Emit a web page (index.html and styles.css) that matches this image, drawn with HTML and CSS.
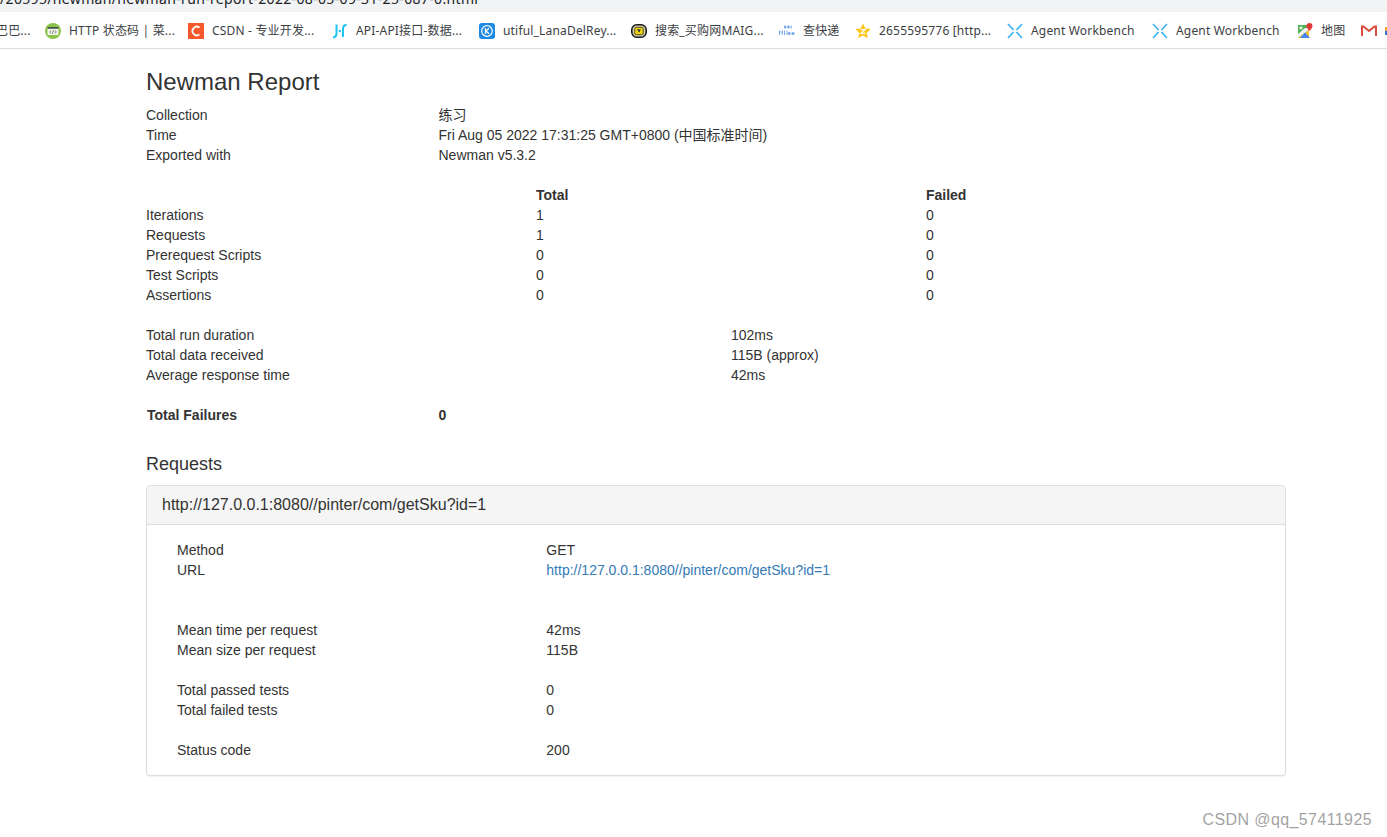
FILE: index.html
```html
<!DOCTYPE html>
<html lang="zh-CN">
<head>
<meta charset="utf-8">
<title>Newman Report</title>
<link rel="stylesheet" href="styles.css">
</head>
<body>
<header class="chrome">
  <div class="address"><span class="address-text">/20595/newman/newman-run-report-2022-08-05-09-31-25-087-0.html</span></div>
  <nav class="bookmarks">
    <a class="bm bm-first"><span class="bm-label">巴巴...</span></a>
    <a class="bm w-103"><svg class="ico" viewBox="0 0 16 16"><circle cx="8" cy="8" r="8" fill="#8bc34a"/><rect x="2.500" y="4" width="11" height="8" rx="1" fill="#f3f6ee"/><rect x="2.500" y="4" width="11" height="1.800" fill="#46564a"/><path d="M6 7.400 4.800 9 6 10.600M10 7.400 11.200 9 10 10.600M8.600 7.200 7.400 10.800" stroke="#5d6b52" stroke-width=".8" fill="none"/></svg><span class="bm-label">HTTP 状态码 | 菜...</span></a>
    <a class="bm w-104"><svg class="ico" viewBox="0 0 16 16"><rect width="16" height="16" fill="#f4582b"/><path d="M11.500 4.600A4.300 4.300 0 1 0 11.500 11.400" stroke="#fff" stroke-width="1.800" fill="none"/></svg><span class="bm-label">CSDN - 专业开发...</span></a>
    <a class="bm w-107"><svg class="ico" viewBox="0 0 16 16"><path d="M4.500 1.500V10.500C4.500 13 3 14.200 1 14.500M14.500 2C12 2 11 3.500 11 6V14" stroke="#19c3f3" stroke-width="2" fill="none"/><circle cx="7.800" cy="8" r="1.200" fill="#19c3f3"/></svg><span class="bm-label">API-API接口-数据...</span></a>
    <a class="bm w-112"><svg class="ico" viewBox="0 0 16 16"><rect width="16" height="16" rx="3" fill="#1e88e5"/><circle cx="8" cy="8" r="5.300" stroke="#fff" stroke-width="1.200" fill="none"/><path d="M6.500 5.200V10.800M10 5.200 7 8l3 2.800" stroke="#fff" stroke-width="1.300" fill="none"/></svg><span class="bm-label">utiful_LanaDelRey...</span></a>
    <a class="bm w-108"><svg class="ico" viewBox="0 0 16 16"><rect x=".8" y="1.800" width="14.400" height="12.400" rx="5" fill="#d9d4a8" stroke="#1c1c1c" stroke-width="1.600"/><rect x="3.800" y="4.300" width="8.400" height="7.400" rx="1.500" fill="#f5d90a" stroke="#222" stroke-width=".8"/><path d="M6 6.200h4L8 9.800z" fill="#333"/></svg><span class="bm-label">搜索_买购网MAIG...</span></a>
    <a class="bm w-36"><svg class="ico" viewBox="0 0 16 16"><g fill="#7aa7ea"><rect x="5" y="2.500" width="2.400" height="3" rx="1"/><rect x="8.300" y="2.500" width="2.400" height="3" rx="1"/><rect x="11.700" y="2.500" width="1" height="3"/><rect x="0" y="7.500" width="1" height="4.500"/><rect x="2.800" y="7.500" width="1" height="4.500"/><rect x="1" y="8.500" width="1.800" height="1"/><rect x="5" y="7.500" width="1" height="4.500"/><rect x="7.500" y="7.500" width="1" height="4.500"/><rect x="9" y="9" width="2.500" height="3" rx="1"/><circle cx="14" cy="10.500" r="1.600"/></g></svg><span class="bm-label">查快递</span></a>
    <a class="bm w-112"><svg class="ico" viewBox="0 0 16 16"><path d="M8 .5 10.300 5.500 15.800 6.100 11.700 9.800 12.900 15.200 8 12.400 3.100 15.200 4.300 9.800.2 6.100 5.700 5.500z" fill="#fcc419"/><path d="M5.600 6.600H10.200L5.800 10.400h4.600" stroke="#fff" stroke-width="1.200" fill="none"/></svg><span class="bm-label">2655595776 [http...</span></a>
    <a class="bm w-105"><svg class="ico" viewBox="0 0 16 16"><path d="M1 1 6.500 7M15 1 9.500 7M1 15 6.500 9M15 15 9.500 9" stroke="#3fb2f4" stroke-width="1.700" fill="none"/></svg><span class="bm-label">Agent Workbench</span></a>
    <a class="bm w-105"><svg class="ico" viewBox="0 0 16 16"><path d="M1 1 6.500 7M15 1 9.500 7M1 15 6.500 9M15 15 9.500 9" stroke="#3fb2f4" stroke-width="1.700" fill="none"/></svg><span class="bm-label">Agent Workbench</span></a>
    <a class="bm w-24"><svg class="ico" viewBox="0 0 16 16"><path d="M1 2h11v13H1z" fill="#4caf50"/><path d="M1 15V11L8 5h4v2z" fill="#f4f4f4"/><path d="M12 7 1 15h11z" fill="#fbc02d"/><path d="M3 15 8 9.500 13 15z" fill="#4285f4"/><rect x="2.500" y="3.500" width="3" height="3" fill="#dff0d8"/><path d="M12.500 0a3 3 0 0 1 3 3c0 2-3 5-3 5s-3-3-3-5a3 3 0 0 1 3-3z" fill="#e53935"/></svg><span class="bm-label">地图</span></a>
    <a class="bm bm-tail"><svg class="ico" viewBox="0 0 16 16"><path d="M1 13V3.500h1.500L8 8l5.500-4.500H15V13" stroke="#db4c3f" stroke-width="2" fill="none"/></svg><svg class="ico" viewBox="0 0 16 16"><rect x="0" y="4" width="2" height="4" fill="#f2a33a"/><rect x="0" y="8" width="2" height="4" fill="#3b6fc4"/></svg></a>
  </nav>
</header>

<main class="container">
  <h1 class="title">Newman Report</h1>
  <section class="block">
    <div class="row"><div class="col-3">Collection</div><div class="col-9">练习</div></div>
    <div class="row"><div class="col-3">Time</div><div class="col-9">Fri Aug 05 2022 17:31:25 GMT+0800 (中国标准时间)</div></div>
    <div class="row"><div class="col-3">Exported with</div><div class="col-9">Newman v5.3.2</div></div>
  </section>
  <section class="block">
    <div class="row strong"><div class="col-4">&nbsp;</div><div class="col-4">Total</div><div class="col-4">Failed</div></div>
    <div class="row"><div class="col-4">Iterations</div><div class="col-4">1</div><div class="col-4">0</div></div>
    <div class="row"><div class="col-4">Requests</div><div class="col-4">1</div><div class="col-4">0</div></div>
    <div class="row"><div class="col-4">Prerequest Scripts</div><div class="col-4">0</div><div class="col-4">0</div></div>
    <div class="row"><div class="col-4">Test Scripts</div><div class="col-4">0</div><div class="col-4">0</div></div>
    <div class="row"><div class="col-4">Assertions</div><div class="col-4">0</div><div class="col-4">0</div></div>
  </section>
  <section class="block">
    <div class="row"><div class="col-6">Total run duration</div><div class="col-6">102ms</div></div>
    <div class="row"><div class="col-6">Total data received</div><div class="col-6">115B (approx)</div></div>
    <div class="row"><div class="col-6">Average response time</div><div class="col-6">42ms</div></div>
  </section>
  <section class="failures">
    <div class="row strong"><div class="col-3 nudge">Total Failures</div><div class="col-9">0</div></div>
  </section>
  <h2 class="subtitle">Requests</h2>
  <section class="panel">
    <div class="panel-heading">http://127.0.0.1:8080//pinter/com/getSku?id=1</div>
    <div class="panel-body">
      <div class="block">
        <div class="row"><div class="col-4">Method</div><div class="col-8">GET</div></div>
        <div class="row"><div class="col-4">URL</div><div class="col-8"><a class="link">http://127.0.0.1:8080//pinter/com/getSku?id=1</a></div></div>
      </div>
      <div class="block block-wide">
        <div class="row"><div class="col-4">Mean time per request</div><div class="col-8">42ms</div></div>
        <div class="row"><div class="col-4">Mean size per request</div><div class="col-8">115B</div></div>
      </div>
      <div class="block">
        <div class="row"><div class="col-4">Total passed tests</div><div class="col-8">0</div></div>
        <div class="row"><div class="col-4">Total failed tests</div><div class="col-8">0</div></div>
      </div>
      <div class="row"><div class="col-4">Status code</div><div class="col-8">200</div></div>
    </div>
  </section>
</main>
<div class="watermark">CSDN @qq_57411925</div>
</body>
</html>
```
FILE: styles.css
```css
* { box-sizing: border-box; }
html, body { margin: 0; padding: 0; height: 837px; overflow: hidden; background: #fff; }
body {
  font-family: "Liberation Sans", "Noto Sans CJK SC", sans-serif;
  font-size: 14px;
  line-height: 20px;
  color: #333;
}

/* browser chrome */
.chrome { height: 49px; border-bottom: 1px solid #dcdee0; overflow: hidden; }
.address { height: 12px; background: #f1f3f4; overflow: hidden; }
.address-text {
  display: block;
  margin-top: -11px;
  font-size: 14px;
  line-height: 20px;
  letter-spacing: .34px;
  color: #202124;
  white-space: nowrap;
  font-family: "Noto Sans", "Liberation Sans", sans-serif;
}
.bookmarks {
  display: flex;
  align-items: center;
  gap: 16px;
  height: 36px;
  padding-top: 1px;
  margin-left: -4px;
  font-family: "Noto Sans", "Noto Sans CJK SC", sans-serif;
  font-size: 12px;
  letter-spacing: .18px;
  color: #3c4043;
  white-space: nowrap;
}
.bm { display: flex; align-items: center; gap: 8px; flex: none; }
.bm-first { width: 33px; }
.ico { width: 16px; height: 16px; flex: none; }
.bm-label { display: block; }
.w-103 .bm-label { width: 103px; }
.w-104 .bm-label { width: 104px; }
.w-105 .bm-label { width: 105px; }
.w-107 .bm-label { width: 107px; }
.w-112 .bm-label { width: 112px; }
.w-108 .bm-label { width: 108px; }
.w-36 .bm-label { width: 36px; }
.w-24 .bm-label { width: 24px; }

/* report */
.container { width: 1170px; margin-left: 131px; padding: 0 15px; }
.title { margin: 20px 0 10px; font-size: 24px; line-height: 26px; font-weight: 400; }
.row { display: flex; margin: 0 -15px; }
.strong { font-weight: 700; }
.col-3, .col-4, .col-6, .col-8, .col-9 { padding: 0 15px; min-height: 20px; }
.col-3 { width: 25%; }
.col-4 { width: 33.3333%; }
.col-6 { width: 50%; }
.col-8 { width: 66.6667%; }
.col-9 { width: 75%; }
.nudge { padding-left: 16px; }
.block { margin-bottom: 20px; }
.block-wide { margin-top: 40px; }
.failures { margin-bottom: 29px; }
.subtitle { margin: 0 0 11px; font-size: 18px; line-height: 20px; font-weight: 400; }

.panel {
  background: #fff;
  border: 1px solid #ddd;
  border-radius: 4px;
  box-shadow: 0 1px 1px rgba(0, 0, 0, .05);
}
.panel-heading {
  padding: 10px 15px;
  background: #f5f5f5;
  border-bottom: 1px solid #ddd;
  border-radius: 3px 3px 0 0;
  font-size: 16px;
  line-height: 18px;
}
.panel-body { padding: 15px 30px 15px; }
.panel-body .row { margin: 0 -15px; }
.link { color: #337ab7; }

.watermark {
  position: absolute;
  right: 15px;
  top: 809px;
  font-size: 16px;
  line-height: 22px;
  color: rgba(130, 130, 130, .75);
  letter-spacing: .4px;
}
```
